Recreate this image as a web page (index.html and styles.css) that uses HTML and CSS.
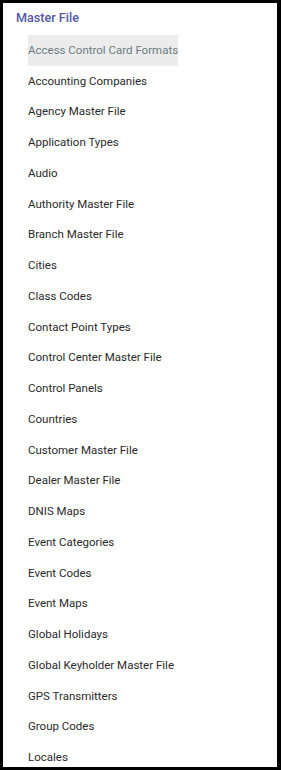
FILE: index.html
```html
<html>

<head>
    <meta charset="utf-8">
    <title>Master File</title>
    <link rel="stylesheet" href="styles.css">
</head>
<body>
    <div class="panel">
        <div class="baslik">Master File</div>
        <ul class="liste">
            <li><span class="secili">Access Control Card Formats</span></li>
            <li><span>Accounting Companies</span></li>
            <li><span>Agency Master File</span></li>
            <li><span>Application Types</span></li>
            <li><span>Audio</span></li>
            <li><span>Authority Master File</span></li>
            <li><span>Branch Master File</span></li>
            <li><span>Cities</span></li>
            <li><span>Class Codes</span></li>
            <li><span>Contact Point Types</span></li>
            <li><span>Control Center Master File</span></li>
            <li><span>Control Panels</span></li>
            <li><span>Countries</span></li>
            <li><span>Customer Master File</span></li>
            <li><span>Dealer Master File</span></li>
            <li><span>DNIS Maps</span></li>
            <li><span>Event Categories</span></li>
            <li><span>Event Codes</span></li>
            <li><span>Event Maps</span></li>
            <li><span>Global Holidays</span></li>
            <li><span>Global Keyholder Master File</span></li>
            <li><span>GPS Transmitters</span></li>
            <li><span>Group Codes</span></li>
            <li><span>Locales</span></li>
        </ul>
    </div>
</body>

</html>
```

FILE: styles.css
```css
body {
    margin: 0;
    font-family: Roboto, "Liberation Sans", sans-serif;
}
.panel {
    width: 281px;
    height: 770px;
    box-sizing: border-box;
    border: 3px solid #000;
    border-right-width: 4px;
    background: #fff;
    overflow: hidden;
}
.baslik {
    height: 32px;
    line-height: 29px;
    padding-left: 13px;
    font-size: 12.6px;
    font-weight: 500;
    color: #5558a6;
}
.liste {
    list-style: none;
    margin: 0;
    padding: 0 0 0 25px;
}
.liste li {
    height: 30.75px;
    display: flex;
    align-items: center;
}
.liste li span {
    display: inline-block;
    line-height: 31px;
    font-size: 11.5px;
    color: #2a2a2a;
}
.liste li .secili {
    background: #ececec;
    color: #6b7c82;
}
```
